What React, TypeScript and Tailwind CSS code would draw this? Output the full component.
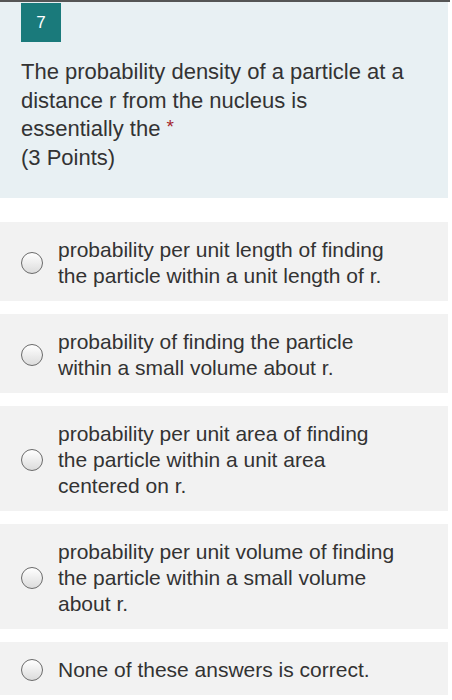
const OPTIONS = [
  'probability per unit length of finding the particle within a unit length of r.',
  'probability of finding the particle within a small volume about r.',
  'probability per unit area of finding the particle within a unit area centered on r.',
  'probability per unit volume of finding the particle within a small volume about r.',
  'None of these answers is correct.',
];

function Radio() {
  return (
    <span className="w-[22px] h-[22px] shrink-0 rounded-full border-[1.5px] border-[#6b6b6b] bg-gradient-to-b from-[#ffffff] to-[#dcdcdc]" />
  );
}

export default function App() {
  return (
    <div
      className="w-[452px] h-[700px] bg-white overflow-hidden text-[#333333]"
      style={{ fontFamily: '"Liberation Sans", Arial, sans-serif' }}
    >
      <div className="h-[2px] w-[450px] bg-[#555555]" />
      <section className="w-[448px] bg-[#e8f0f3] pl-[21px] pr-[36px] pt-px pb-[26px]">
        <div className="w-[40px] h-[39px] bg-[#1a7a7b] text-white text-[17px] flex items-center justify-center">
          7
        </div>
        <p className="mt-[16px] text-[22px] leading-[28.5px]">
          The probability density of a particle at a distance r from the nucleus is essentially the{' '}
          <span className="text-[#a4262c] text-[19px] leading-none relative -top-[3px]">*</span>
        </p>
        <p className="text-[22px] leading-[28.5px]">(3 Points)</p>
      </section>

      <div className="mt-[24px] flex flex-col gap-[13px]">
        {OPTIONS.map((opt) => (
          <div
            key={opt}
            className="w-[448px] bg-[#f2f2f2] flex items-center pl-[21px] pr-[50px] pt-[15px] pb-[12px]"
          >
            <Radio />
            <span className="ml-[15px] text-[21px] leading-[26px]">{opt}</span>
          </div>
        ))}
      </div>
    </div>
  );
}
